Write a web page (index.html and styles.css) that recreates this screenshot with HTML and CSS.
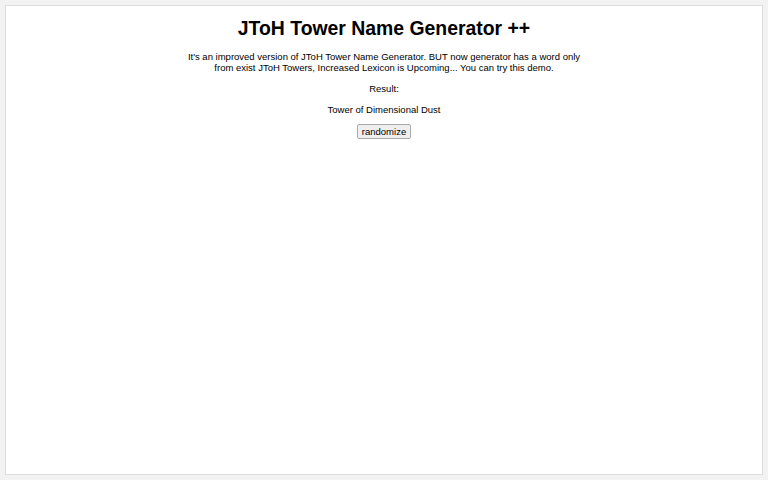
FILE: index.html
```html
<!DOCTYPE html>
<html lang="en">
<head>
    <meta charset="UTF-8">
    <meta name="viewport" content="width=device-width, initial-scale=1.0">
    <title>JToH Tower Name Generator ++</title>
    <link rel="stylesheet" href="styles.css">
</head>
<body>
    <div class="container">
        <h1>JToH Tower Name Generator ++</h1>
        <p class="intro">It's an improved version of JToH Tower Name Generator. BUT now generator has a word only from exist JToH Towers, Increased Lexicon is Upcoming... You can try this demo.</p>
        <p>Result:</p>
        <p id="result">Tower of Dimensional Dust</p>
        <button id="randomBtn">randomize</button>
    </div>
</body>
</html>
```
FILE: styles.css
```css
html, body {
    height: 100%;
}

body {
    font-family: "Liberation Sans", Arial, sans-serif;
    background-color: #f2f2f2;
    margin: 0;
    padding: 5px;
    box-sizing: border-box;
    color: #000;
}

.container {
    background-color: #ffffff;
    border: 1px solid #dcdcdc;
    height: 100%;
    box-sizing: border-box;
    text-align: center;
    font-size: 9.5px;
    padding-top: 11px;
}

h1 {
    font-size: 19.4px;
    margin: 0 0 11px;
}

p {
    margin: 10px auto;
    line-height: 11px;
}

.intro {
    max-width: 400px;
    margin-top: 0;
}

#result {
    margin-bottom: 9px;
}

#randomBtn {
    font-family: "Liberation Sans", Arial, sans-serif;
    font-size: 9.5px;
    padding: 1px 4px;
    background-color: #efefef;
    border: 1px solid #a9a9a9;
    border-radius: 2px;
    color: #000;
}
```
